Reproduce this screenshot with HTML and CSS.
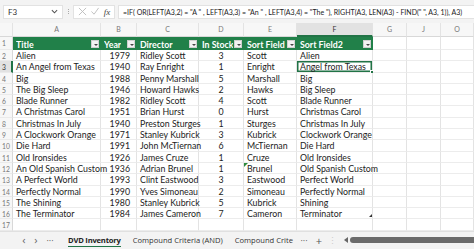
FILE: index.html
```html
<!DOCTYPE html>
<html>
<head>
<meta charset="utf-8">
<link rel="stylesheet" href="styles.css">
</head>
<body>
<div class="app">
  <div class="fbar">
    <div class="namebox"><span>F3</span><svg class="chev" viewBox="0 0 8 5" width="7" height="5"><path d="M1 1 L4 4 L7 1" fill="none" stroke="#555" stroke-width="1.2"/></svg></div>
    <div class="dots"><i></i><i></i><i></i></div>
    <div class="fxbox">
      <svg viewBox="0 0 10 10" width="9" height="9"><path d="M1 1 L9 9 M9 1 L1 9" stroke="#bbb" stroke-width="1"/></svg>
      <svg viewBox="0 0 10 10" width="10" height="9"><path d="M1 5 L4 8 L9 1" fill="none" stroke="#bbb" stroke-width="1"/></svg>
      <span class="fx">fx</span>
    </div>
    <div class="formula">=IF( OR(LEFT(A3,2) = "A " , LEFT(A3,3) = "An " , LEFT(A3,4) = "The "), RIGHT(A3, LEN(A3) - FIND(" ", A3, 1)), A3)</div>
  </div>

  <div class="sheet">
    <div class="ch corner"></div><div class="ch">A</div><div class="ch">B</div><div class="ch">C</div><div class="ch">D</div><div class="ch">E</div><div class="ch sel">F</div><div class="ch">G</div><div class="ch">J</div><div class="ch">O</div>

    <div class="rh">1</div>
    <div class="th"><span>Title</span><b class="fb"></b></div>
    <div class="th"><span>Year</span><b class="fb"></b></div>
    <div class="th"><span>Director</span><b class="fb"></b></div>
    <div class="th"><span>In Stock</span><b class="fb"></b></div>
    <div class="th"><span>Sort Field</span><b class="fb"></b></div>
    <div class="th"><span>Sort Field2</span><b class="fb"></b></div>
    <div class="c"></div><div class="c"></div><div class="c"></div>

    <div class="rh">2</div><div class="c">Alien</div><div class="c num">1979</div><div class="c">Ridley Scott</div><div class="c ctr">3</div><div class="c">Scott</div><div class="c">Alien</div><div class="c"></div><div class="c"></div><div class="c"></div>
    <div class="rh rsel">3</div><div class="c">An Angel from Texas</div><div class="c num">1940</div><div class="c">Ray Enright</div><div class="c ctr">1</div><div class="c">Enright</div><div class="c active">Angel from Texas<i class="handle"></i></div><div class="c"></div><div class="c"></div><div class="c"></div>
    <div class="rh">4</div><div class="c">Big</div><div class="c num">1988</div><div class="c">Penny Marshall</div><div class="c ctr">5</div><div class="c">Marshall</div><div class="c">Big</div><div class="c"></div><div class="c"></div><div class="c"></div>
    <div class="rh">5</div><div class="c">The Big Sleep</div><div class="c num">1946</div><div class="c">Howard Hawks</div><div class="c ctr">2</div><div class="c">Hawks</div><div class="c">Big Sleep</div><div class="c"></div><div class="c"></div><div class="c"></div>
    <div class="rh">6</div><div class="c">Blade Runner</div><div class="c num">1982</div><div class="c">Ridley Scott</div><div class="c ctr">4</div><div class="c">Scott</div><div class="c">Blade Runner</div><div class="c"></div><div class="c"></div><div class="c"></div>
    <div class="rh">7</div><div class="c">A Christmas Carol</div><div class="c num">1951</div><div class="c">Brian Hurst</div><div class="c ctr">0</div><div class="c">Hurst</div><div class="c">Christmas Carol</div><div class="c"></div><div class="c"></div><div class="c"></div>
    <div class="rh">8</div><div class="c">Christmas In July</div><div class="c num">1940</div><div class="c">Preston Sturges</div><div class="c ctr">1</div><div class="c">Sturges</div><div class="c">Christmas In July</div><div class="c"></div><div class="c"></div><div class="c"></div>
    <div class="rh">9</div><div class="c">A Clockwork Orange</div><div class="c num">1971</div><div class="c">Stanley Kubrick</div><div class="c ctr">3</div><div class="c">Kubrick</div><div class="c">Clockwork Orange</div><div class="c"></div><div class="c"></div><div class="c"></div>
    <div class="rh">10</div><div class="c">Die Hard</div><div class="c num">1991</div><div class="c">John McTiernan</div><div class="c ctr">6</div><div class="c">McTiernan</div><div class="c">Die Hard</div><div class="c"></div><div class="c"></div><div class="c"></div>
    <div class="rh">11</div><div class="c">Old Ironsides</div><div class="c num">1926</div><div class="c">James Cruze</div><div class="c ctr">1</div><div class="c">Cruze</div><div class="c">Old Ironsides</div><div class="c"></div><div class="c"></div><div class="c"></div>
    <div class="rh">12</div><div class="c">An Old Spanish Custom</div><div class="c num">1936</div><div class="c">Adrian Brunel</div><div class="c ctr">1</div><div class="c err">Brunel</div><div class="c">Old Spanish Custom</div><div class="c"></div><div class="c"></div><div class="c"></div>
    <div class="rh">13</div><div class="c">A Perfect World</div><div class="c num">1993</div><div class="c">Clint Eastwood</div><div class="c ctr">3</div><div class="c">Eastwood</div><div class="c">Perfect World</div><div class="c"></div><div class="c"></div><div class="c"></div>
    <div class="rh">14</div><div class="c">Perfectly Normal</div><div class="c num">1990</div><div class="c">Yves Simoneau</div><div class="c ctr">2</div><div class="c">Simoneau</div><div class="c">Perfectly Normal</div><div class="c"></div><div class="c"></div><div class="c"></div>
    <div class="rh">15</div><div class="c">The Shining</div><div class="c num">1980</div><div class="c">Stanley Kubrick</div><div class="c ctr">5</div><div class="c">Kubrick</div><div class="c">Shining</div><div class="c"></div><div class="c"></div><div class="c"></div>
    <div class="rh">16</div><div class="c">The Terminator</div><div class="c num">1984</div><div class="c">James Cameron</div><div class="c ctr">7</div><div class="c">Cameron</div><div class="c tend">Terminator</div><div class="c"></div><div class="c"></div><div class="c"></div>
    <div class="rh">17</div><div class="c"></div><div class="c"></div><div class="c"></div><div class="c"></div><div class="c"></div><div class="c"></div><div class="c"></div><div class="c"></div><div class="c"></div>
  </div>

  <div class="tabs">
    <span class="nav">&lsaquo;</span>
    <span class="nav">&rsaquo;</span>
    <span class="more">&middot;&middot;&middot;</span>
    <span class="tab active"><span class="ul">DVD Inventory</span></span>
    <span class="tab">Compound Criteria (AND)</span>
    <span class="tab last">Compound Crite</span>
    <span class="more">&middot;&middot;&middot;</span>
    <span class="plus">+</span>
    <span class="vdots">&#8942;</span>
    <span class="larrow"></span>
    <span class="scroll"></span>
  </div>
</div>
</body>
</html>
```

FILE: styles.css
```css
* { box-sizing: border-box; }
html, body { margin: 0; padding: 0; }
body {
  width: 474px;
  height: 249px;
  overflow: hidden;
  background: #fff;
  font-family: Lato, "Liberation Sans", sans-serif;
}
.app { display: flex; flex-direction: column; height: 249px; }

.fbar {
  height: 23px;
  background: #f3f3f3;
  display: flex;
  align-items: center;
  padding: 0 0 0 3px;
  gap: 3px;
}
.namebox {
  width: 60px;
  height: 14px;
  background: #fff;
  border: 1px solid #e2e2e2;
  display: flex;
  align-items: center;
  justify-content: space-between;
  padding: 0 4px 0 4px;
  font-size: 8px;
  color: #333;
}
.dots { display: flex; flex-direction: column; gap: 1px; width: 4px; align-items: center; }
.dots i { width: 1px; height: 1px; background: #aaa; display: block; }
.fxbox {
  width: 42px;
  height: 14px;
  background: #fff;
  border: 1px solid #e2e2e2;
  display: flex;
  align-items: center;
  justify-content: space-around;
  padding: 0 2px;
}
.fx { font-family: "Liberation Serif", serif; font-style: italic; font-size: 9px; color: #444; }
.formula {
  flex: 1;
  height: 14px;
  background: #fff;
  border: 1px solid #e2e2e2;
  border-right: none;
  font-size: 7px;
  color: #222;
  line-height: 12px;
  padding-left: 4px;
  white-space: nowrap;
  overflow: hidden;
}

.sheet {
  display: grid;
  grid-template-columns: 13px 88px 36px 62px 45px 53px 76px 34px 34px 33px;
  grid-template-rows: 14px 13px repeat(16, 11.3px);
  font-size: 8.8px;
  color: #222;
}
.ch {
  background: #f7f7f7;
  border-right: 1px solid #e3e3e3;
  border-bottom: 1px solid #d8d8d8;
  font-size: 7px;
  color: #777;
  text-align: center;
  line-height: 13px;
}
.ch.sel { background: #e2e2e2; border-bottom: 2px solid #217346; color: #333; }
.rh {
  background: #f7f7f7;
  border-right: 1px solid #d8d8d8;
  border-bottom: 1px solid #eaeaea;
  font-size: 6.8px;
  color: #777;
  line-height: 12px;
  padding-left: 2px;
}
.rh.rsel { background: #e2e2e2; border-right: 2px solid #217346; color: #333; }
.c {
  border-right: 1px solid #e3e3e3;
  border-bottom: 1px solid #ececec;
  padding: 0 3px;
  line-height: 12px;
  white-space: nowrap;
  overflow: visible;
  position: relative;
}
.num { text-align: right; padding-right: 6px; }
.ctr { text-align: center; }
.th {
  background: #218049;
  color: #fff;
  font-weight: bold;
  font-size: 8.8px;
  display: flex;
  align-items: center;
  justify-content: space-between;
  padding: 1px 1px 0 3px;
  white-space: nowrap;
  border-right: 1px solid #218049;
}
.th span { overflow: hidden; }
.fb {
  flex: none;
  width: 8px;
  height: 8px;
  background: #f2f2f2;
  border: 1px solid #d0d0d0;
  position: relative;
  margin-left: 1px;
}
.fb::after {
  content: "";
  position: absolute;
  left: 1.5px;
  top: 2.5px;
  border-left: 2px solid transparent;
  border-right: 2px solid transparent;
  border-top: 2px solid #444;
}
.active { box-shadow: inset 0 0 0 1.5px #217346; }
.handle {
  position: absolute;
  right: -2px;
  bottom: -2px;
  width: 4px;
  height: 4px;
  background: #217346;
  border: 1px solid #fff;
}
.err::before {
  content: "";
  position: absolute;
  left: 0;
  top: 0;
  border-top: 4px solid #2e8b3d;
  border-right: 4px solid transparent;
}
.tend::after {
  content: "";
  position: absolute;
  right: 0;
  bottom: 1px;
  border-bottom: 3px solid #333;
  border-left: 3px solid transparent;
}

.tabs {
  flex: 1;
  background: #f3f3f3;
  border-top: 1px solid #e0e0e0;
  display: flex;
  align-items: center;
  font-family: "Open Sans", "Liberation Sans", sans-serif;
  font-size: 7.6px;
  color: #333;
  padding-left: 18px;
}
.nav { font-size: 11px; color: #666; width: 12px; text-align: center; line-height: 10px; }
.more { font-size: 9px; color: #555; width: 16px; text-align: center; }
.tab { padding: 0 6px; line-height: 12px; }
.tab.tab.active { padding-left: 10px; background: none; box-shadow: none; }
.tab.last { padding-right: 3px; }
.ul {
  font-weight: bold;
  color: #222;
  letter-spacing: -0.2px;
  border-bottom: 1.5px solid #217346;
  padding-bottom: 1px;
}
.plus { font-size: 11px; color: #555; width: 14px; text-align: center; }
.vdots { font-size: 9px; color: #ccc; width: 14px; text-align: center; }
.larrow {
  width: 0; height: 0;
  border-top: 3px solid transparent;
  border-bottom: 3px solid transparent;
  border-right: 4px solid #666;
  margin-left: 4px;
}
.scroll {
  flex: 1;
  height: 6px;
  background: #6b6b6b;
  border-radius: 3px 0 0 3px;
  margin-left: 2px;
}
```
